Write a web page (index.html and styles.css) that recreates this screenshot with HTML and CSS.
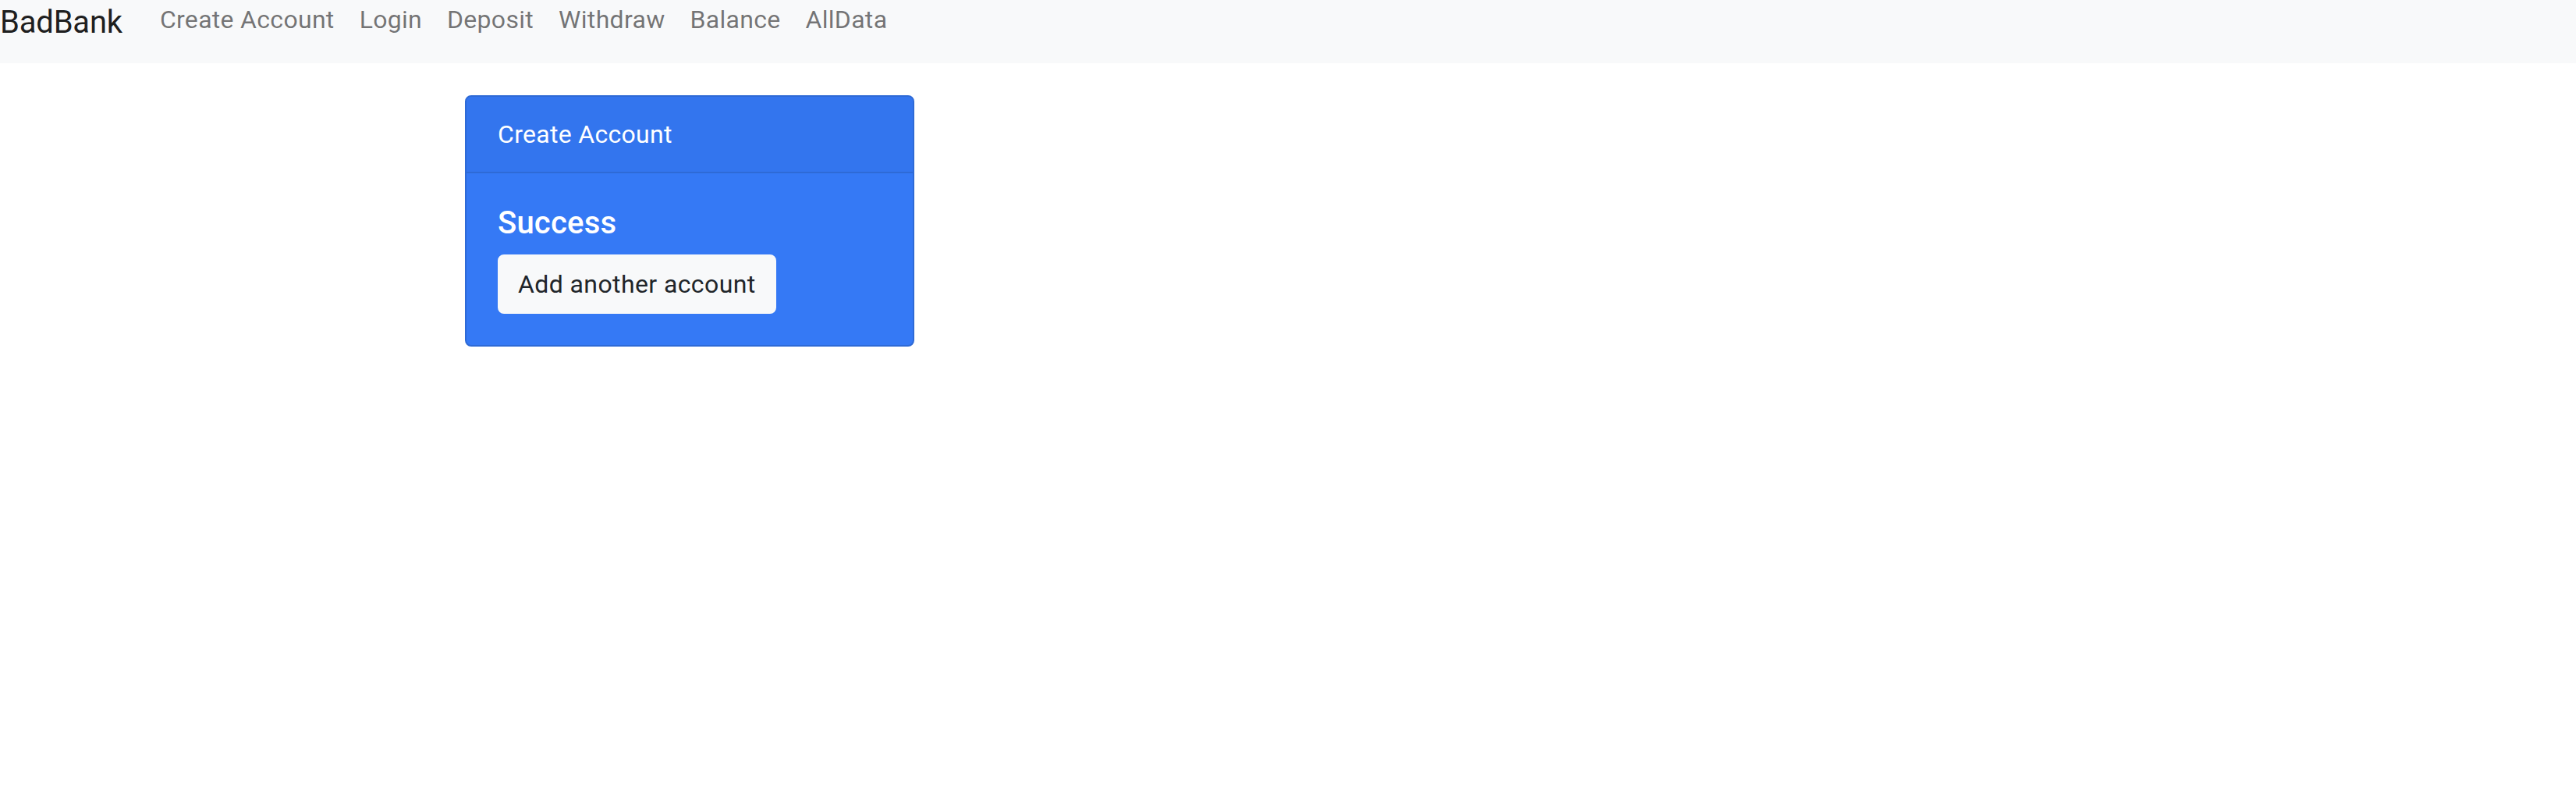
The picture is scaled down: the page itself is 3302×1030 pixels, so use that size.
FILE: index.html
```html
<!DOCTYPE html>
<html lang="en">
<head>
<meta charset="utf-8">
<title>BadBank</title>
<link rel="stylesheet" href="styles.css">
</head>
<body>
<nav class="navbar">
  <a class="brand" href="#">BadBank</a>
  <ul class="nav">
    <li><a class="nav-link" href="#">Create Account</a></li>
    <li><a class="nav-link" href="#">Login</a></li>
    <li><a class="nav-link" href="#">Deposit</a></li>
    <li><a class="nav-link" href="#">Withdraw</a></li>
    <li><a class="nav-link" href="#">Balance</a></li>
    <li><a class="nav-link" href="#">AllData</a></li>
  </ul>
</nav>
<main class="content">
  <div class="card">
    <div class="card-header">Create Account</div>
    <div class="card-body">
      <h5 class="card-title">Success</h5>
      <button class="btn-light" type="button">Add another account</button>
    </div>
  </div>
</main>
</body>
</html>
```
FILE: styles.css
```css
html, body {
  margin: 0;
  padding: 0;
  background: #ffffff;
  font-family: Roboto, "Liberation Sans", Arial, sans-serif;
  color: #212529;
}

.navbar {
  display: flex;
  align-items: flex-start;
  height: 81px;
  background: #f8f9fa;
}

.brand {
  font-size: 40px;
  line-height: 58px;
  color: rgba(0, 0, 0, 0.9);
  text-decoration: none;
  margin-right: 32px;
  letter-spacing: -0.2px;
}

.nav {
  display: flex;
  list-style: none;
  margin: 0;
  padding: 0;
}

.nav-link {
  display: block;
  font-size: 32px;
  line-height: 50px;
  padding: 0 16px;
  letter-spacing: 0.3px;
  color: rgba(0, 0, 0, 0.55);
  text-decoration: none;
}

.content {
  padding: 41px 0 0 596px;
}

.card {
  width: 576px;
  box-sizing: border-box;
  background: rgb(53, 121, 245);
  border: 2px solid rgb(46, 106, 214);
  border-radius: 8px;
  color: #ffffff;
  overflow: hidden;
}

.card-header {
  padding: 24px 40px;
  font-size: 32px;
  line-height: 48px;
  letter-spacing: 0.3px;
  background: rgb(51, 117, 238);
  border-bottom: 2px solid rgb(46, 106, 214);
}

.card-body {
  padding: 40px;
}

.card-title {
  margin: 0 0 16px 0;
  font-size: 40px;
  line-height: 48px;
  font-weight: 500;
  letter-spacing: 0.2px;
}

.btn-light {
  display: inline-block;
  font-family: inherit;
  font-size: 32px;
  line-height: 48px;
  padding: 12px 24px;
  letter-spacing: 0.4px;
  color: #212529;
  background: #f8f9fa;
  border: 2px solid #f8f9fa;
  border-radius: 8px;
  cursor: pointer;
}
```
